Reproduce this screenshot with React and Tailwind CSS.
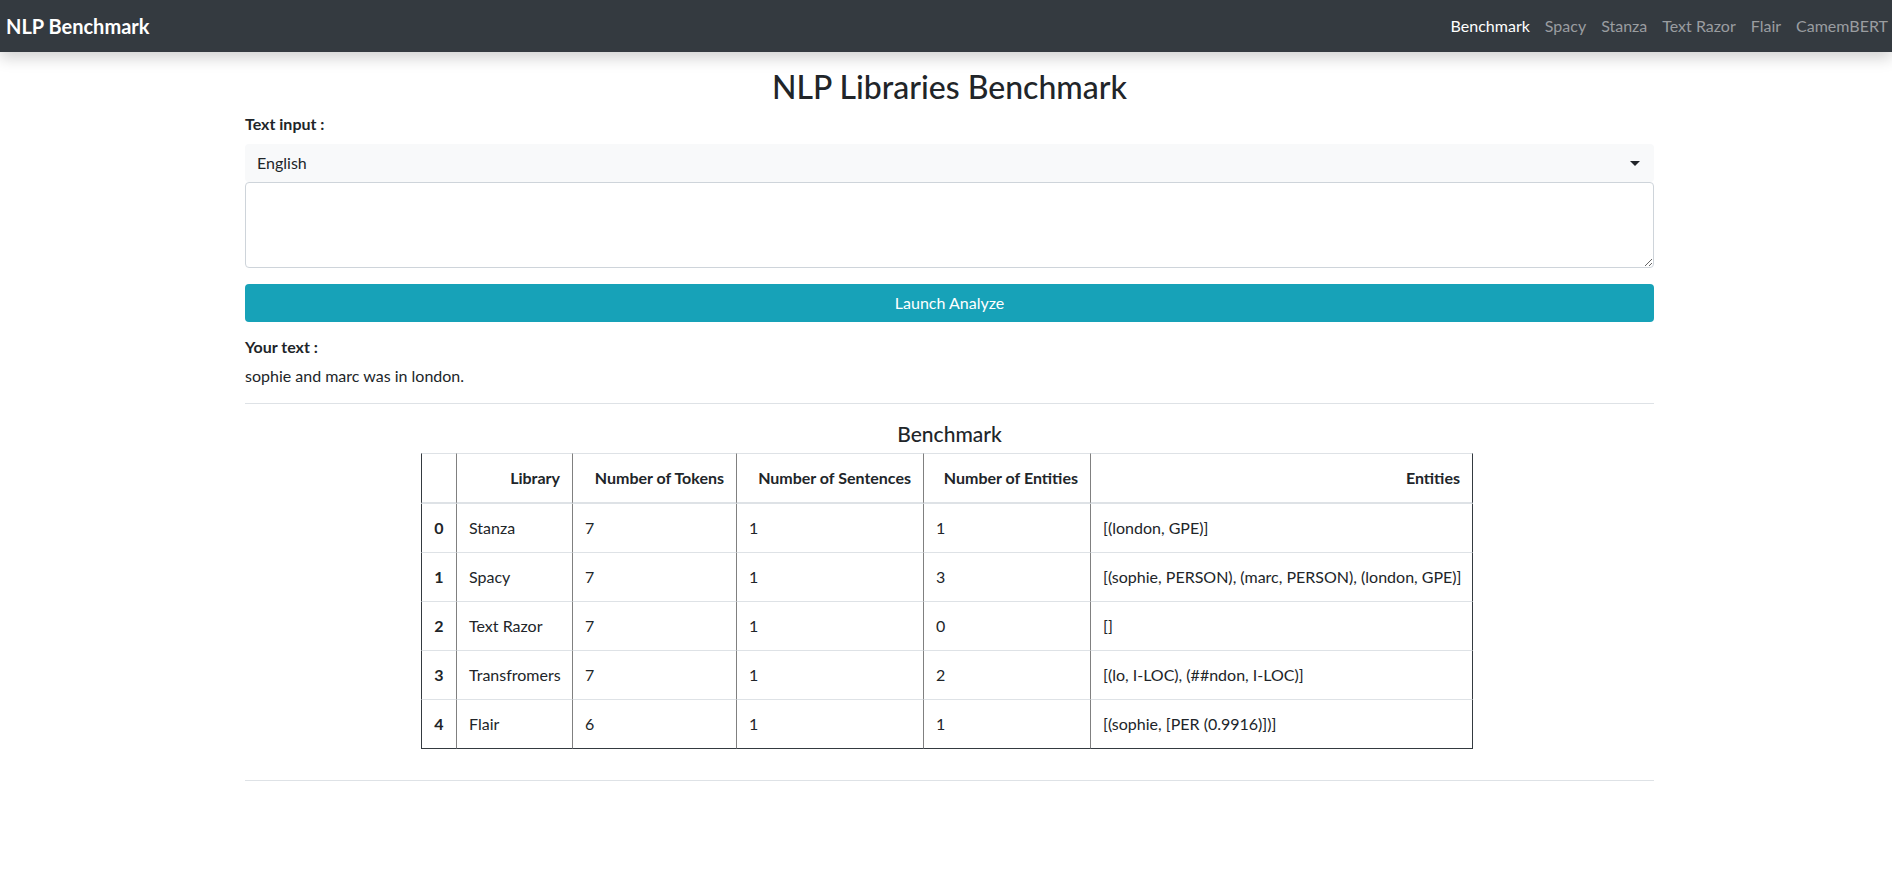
const rows = [
  { i: 0, lib: 'Stanza', tokens: 7, sentences: 1, entities: 1, list: '[(london, GPE)]' },
  { i: 1, lib: 'Spacy', tokens: 7, sentences: 1, entities: 3, list: '[(sophie, PERSON), (marc, PERSON), (london, GPE)]' },
  { i: 2, lib: 'Text Razor', tokens: 7, sentences: 1, entities: 0, list: '[]' },
  { i: 3, lib: 'Transfromers', tokens: 7, sentences: 1, entities: 2, list: '[(lo, I-LOC), (##ndon, I-LOC)]' },
  { i: 4, lib: 'Flair', tokens: 6, sentences: 1, entities: 1, list: '[(sophie, [PER (0.9916)])]' },
];

const links = ['Benchmark', 'Spacy', 'Stanza', 'Text Razor', 'Flair', 'CamemBERT'];

function Navbar() {
  return (
    <nav className="relative z-10 flex h-[52px] items-center justify-between bg-[#343a40] pl-[6px] pr-[4px] shadow-[0_6px_14px_rgba(0,0,0,0.18)]">
      <span className="text-[20px] font-bold text-white">NLP Benchmark</span>
      <div className="flex items-center gap-[15px] text-[16px]">
        {links.map((l, idx) => (
          <a key={l} href="#" className={idx === 0 ? 'text-white' : 'text-[#9a9da0]'}>
            {l}
          </a>
        ))}
      </div>
    </nav>
  );
}

function BenchmarkTable() {
  const th = 'border-t border-b-2 border-t-[#dee2e6] border-b-[#dee2e6] px-3 py-3 text-right font-bold';
  return (
    <table className="ml-[176px] w-[1052px] table-fixed border-separate border-spacing-0 text-[16px]">
      <colgroup>
        <col className="w-[35px]" />
        <col className="w-[116px]" />
        <col className="w-[164px]" />
        <col className="w-[187px]" />
        <col className="w-[167px]" />
        <col className="w-[383px]" />
      </colgroup>
      <thead>
        <tr className="h-[50px]">
          <th className={`${th} border-l border-l-[#343a40]`}></th>
          <th className={`${th} border-l border-l-[#808080]`}>Library</th>
          <th className={`${th} border-l border-l-[#808080] whitespace-nowrap`}>Number of Tokens</th>
          <th className={`${th} border-l border-l-[#808080] whitespace-nowrap`}>Number of Sentences</th>
          <th className={`${th} border-l border-l-[#808080] whitespace-nowrap`}>Number of Entities</th>
          <th className={`${th} border-l border-r border-l-[#808080] border-r-[#343a40]`}>Entities</th>
        </tr>
      </thead>
      <tbody>
        {rows.map((r, idx) => {
          const top = idx === 0 ? '' : 'border-t border-t-[#dee2e6]';
          const bottom = idx === rows.length - 1 ? 'border-b border-b-[#343a40]' : '';
          const td = `${top} ${bottom} border-l border-l-[#808080] px-3 py-3 text-left whitespace-nowrap`;
          return (
            <tr key={r.i}>
              <th className={`${top} ${bottom} border-l border-l-[#343a40] py-3 text-center font-bold`}>{r.i}</th>
              <td className={td}>{r.lib}</td>
              <td className={td}>{r.tokens}</td>
              <td className={td}>{r.sentences}</td>
              <td className={td}>{r.entities}</td>
              <td className={`${td} border-r border-r-[#343a40]`}>{r.list}</td>
            </tr>
          );
        })}
      </tbody>
    </table>
  );
}

export default function App() {
  return (
    <div className="min-h-screen bg-white text-[16px] leading-6 text-[#212529] [font-family:Lato,'Open_Sans',sans-serif]">
      <Navbar />
      <main className="ml-[245px] w-[1409px] pt-[16px]">
        <h2 className="text-center text-[32px] font-medium leading-[1.2]">NLP Libraries Benchmark</h2>
        <label className="mt-[6px] block font-bold">Text input :</label>
        <div className="mt-[8px] flex h-[38px] items-center justify-between rounded-[4px] bg-[#f8f9fa] pl-3 pr-[14px]">
          <span>English</span>
          <span className="h-0 w-0 border-x-[5px] border-t-[5px] border-x-transparent border-t-[#212529]"></span>
        </div>
        <textarea className="block h-[86px] w-full resize-y rounded-[4px] border border-[#ced4da] bg-white px-3 py-[6px] outline-none"></textarea>
        <button className="mt-[16px] flex h-[38px] w-full items-center justify-center rounded-[4px] bg-[#17a2b8] text-white">
          Launch Analyze
        </button>
        <p className="mt-[13px] font-bold">Your text :</p>
        <p className="mt-[5px]">sophie and marc was in london.</p>
        <hr className="mt-[15px] border-t border-[#dee2e6]" />
        <h4 className="mt-[17px] text-center text-[21px] font-medium leading-[1.2]">Benchmark</h4>
        <div className="mt-[6px]">
          <BenchmarkTable />
        </div>
        <hr className="mt-[31px] border-t border-[#dee2e6]" />
      </main>
    </div>
  );
}
